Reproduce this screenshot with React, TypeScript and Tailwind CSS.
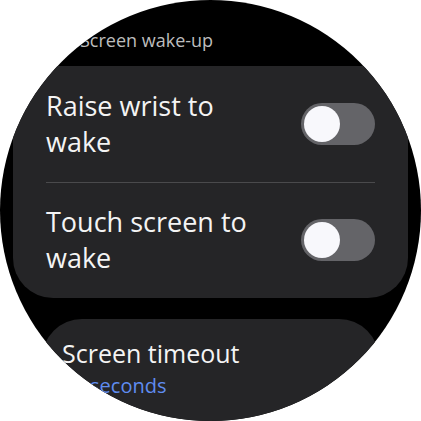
import React from "react";

function Toggle() {
  return (
    <div className="w-[74px] h-[42px] rounded-full bg-[#646468] flex items-center pl-[3px] shrink-0">
      <div className="w-[36px] h-[36px] rounded-full bg-[#f8f8fc]" />
    </div>
  );
}

export default function App() {
  return (
    <div className="w-[421px] h-[421px] bg-white" style={{ fontFamily: "'Open Sans', Roboto, sans-serif" }}>
      <div className="w-[421px] h-[421px] rounded-full overflow-hidden bg-black flex flex-col">
        <div className="pl-[80px] pt-[28px] h-[66px] shrink-0 text-[18px] leading-[24px] text-[#bdbdbd]">Screen wake-up</div>
        <div className="mx-[13px] rounded-[40px] bg-[#252527] px-[33px] shrink-0">
          <div className="flex items-center justify-between pt-[22px] pb-[22px]">
            <div className="text-[27px] leading-[36px] text-[#f4f4f4]">
              Raise wrist to
              <br />
              wake
            </div>
            <Toggle />
          </div>
          <div className="h-px bg-[#4a4a4c]" />
          <div className="flex items-center justify-between pt-[21px] pb-[22px]">
            <div className="text-[27px] leading-[36px] text-[#f4f4f4]">
              Touch screen to
              <br />
              wake
            </div>
            <Toggle />
          </div>
        </div>
        <div className="mt-[21px] mx-[42px] rounded-[40px] bg-[#252527] px-[20px] pt-[18px] pb-[40px] shrink-0">
          <div className="text-[25px] leading-[32px] text-[#f4f4f4]">Screen timeout</div>
          <div className="mt-[3px] text-[20px] leading-[28px] text-[#5f8cf0]">30 seconds</div>
        </div>
      </div>
    </div>
  );
}
